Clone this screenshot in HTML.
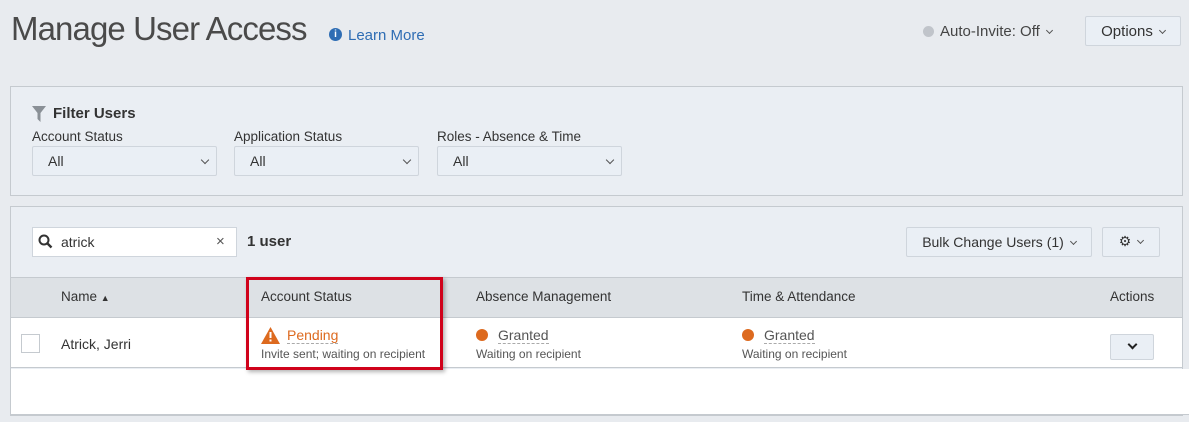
<!DOCTYPE html>
<html><head><style>
*{box-sizing:border-box;margin:0;padding:0}
body{width:1189px;height:422px;background:#e8ebef;font-family:"Liberation Sans",sans-serif;color:#333;position:relative;overflow:hidden;font-size:13px}
.a{position:absolute}
.sel{position:absolute;height:30px;background:#eaeff5;border:1px solid #cfd5dc;border-radius:2px;font-size:14px;padding:6px 0 0 15px;color:#333}
.sel:after{content:"";position:absolute;right:8px;top:10px;width:5px;height:5px;border-right:1px solid #555;border-bottom:1px solid #555;transform:rotate(45deg)}
.lbl{position:absolute;font-size:13.5px;color:#333}
.btn{position:absolute;background:#eaeff5;border:1px solid #cfd5dc;border-radius:2px;font-size:14px;color:#333;text-align:center}
.chev{display:inline-block;width:5px;height:5px;border-right:1px solid #555;border-bottom:1px solid #555;transform:rotate(45deg);margin-left:7px;position:relative;top:-3px}
.th{position:absolute;top:289px;font-size:13.5px;color:#333}
.dot{display:inline-block;width:12px;height:12px;border-radius:50%;background:#dd6a1f;vertical-align:-1px;margin-right:10px}
.g{border-bottom:1px dashed #aaa;color:#555;font-size:14px}
.sub{position:absolute;font-size:12px;color:#555}
</style></head><body>
<div class="a" style="left:11px;top:10px;font-size:33px;color:#4a4a4a;letter-spacing:-0.9px;font-weight:300">Manage User Access</div>
<div class="a" style="left:329px;top:28px;width:13px;height:13px;border-radius:50%;background:#2e6db4;color:#fff;font-size:10px;font-weight:bold;text-align:center;line-height:13px">i</div>
<div class="a" style="left:348px;top:27px;font-size:15px;color:#2e6db4">Learn More</div>
<div class="a" style="left:923px;top:26px;width:11px;height:11px;border-radius:50%;background:#c0c4ca"></div>
<div class="a" style="left:940px;top:23px;font-size:15px;color:#444">Auto-Invite: Off<span class="chev"></span></div>
<div class="btn" style="left:1085px;top:16px;width:96px;height:30px;padding-top:6px;font-size:15px">Options<span class="chev"></span></div>

<div class="a" style="left:10px;top:86px;width:1173px;height:110px;background:#eaeef3;border:1px solid #c5cacf"></div>
<svg class="a" style="left:32px;top:106px" width="14" height="16" viewBox="0 0 14 16"><path d="M0 0H14L8.5 7V16L5.5 13V7Z" fill="#8a9096"/></svg>
<div class="a" style="left:53px;top:105px;font-size:15px;font-weight:bold;color:#333">Filter Users</div>
<div class="lbl" style="left:32px;top:129px">Account Status</div>
<div class="lbl" style="left:234px;top:129px">Application Status</div>
<div class="lbl" style="left:437px;top:129px">Roles - Absence &amp; Time</div>
<div class="sel" style="left:32px;top:146px;width:185px">All</div>
<div class="sel" style="left:234px;top:146px;width:185px">All</div>
<div class="sel" style="left:437px;top:146px;width:185px">All</div>

<div class="a" style="left:10px;top:206px;width:1173px;height:210px;background:#eaeef3;border:1px solid #c5cacf"></div>
<div class="a" style="left:32px;top:227px;width:205px;height:30px;background:#fff;border:1px solid #cfd5dc"></div>
<svg class="a" style="left:38px;top:234px" width="15" height="15" viewBox="0 0 15 15"><circle cx="6" cy="6" r="4.5" fill="none" stroke="#333" stroke-width="2"/><path d="M9.5 9.5L13.5 13.5" stroke="#333" stroke-width="2.4"/></svg>
<div class="a" style="left:61px;top:234px;font-size:14px;color:#333">atrick</div>
<div class="a" style="left:216px;top:233px;font-size:15px;color:#555">×</div>
<div class="a" style="left:247px;top:233px;font-size:15px;font-weight:bold;color:#333">1 user</div>
<div class="btn" style="left:906px;top:227px;width:186px;height:30px;padding-top:6px">Bulk Change Users (1)<span class="chev"></span></div>
<div class="btn" style="left:1102px;top:227px;width:58px;height:30px;padding-top:5px"><span style="font-size:14px">⚙</span><span class="chev"></span></div>

<div class="a" style="left:11px;top:277px;width:1171px;height:41px;background:#dde1e5;border-top:1px solid #c5cacf;border-bottom:1px solid #c5cacf"></div>
<div class="a" style="left:11px;top:318px;width:1171px;height:50px;background:#fff;border-bottom:1px solid #c5cacf"></div>
<div class="a" style="left:11px;top:369px;width:1178px;height:46px;background:#fff;border-bottom:1px solid #c5cacf"></div>
<div class="th" style="left:61px">Name <span style="font-size:9px">▲</span></div>
<div class="th" style="left:261px">Account Status</div>
<div class="th" style="left:476px">Absence Management</div>
<div class="th" style="left:742px">Time &amp; Attendance</div>
<div class="th" style="left:1110px">Actions</div>

<div class="a" style="left:21px;top:334px;width:19px;height:19px;border:1px solid #c5cacf;background:#fff"></div>
<div class="a" style="left:61px;top:336px;font-size:14px;color:#333">Atrick, Jerri</div>
<svg class="a" style="left:261px;top:327px" width="19" height="17" viewBox="0 0 19 17"><path d="M9.5 0L19 17H0Z" fill="#dd6a1f"/><rect x="8.5" y="5" width="2" height="6" fill="#fff"/><rect x="8.5" y="12.5" width="2" height="2" fill="#fff"/></svg>
<div class="a" style="left:287px;top:327px;font-size:14px;color:#dd6a1f;border-bottom:1px dashed #aaa">Pending</div>
<div class="sub" style="left:261px;top:347px">Invite sent; waiting on recipient</div>
<div class="a" style="left:476px;top:327px"><span class="dot"></span><span class="g">Granted</span></div>
<div class="sub" style="left:476px;top:347px">Waiting on recipient</div>
<div class="a" style="left:742px;top:327px"><span class="dot"></span><span class="g">Granted</span></div>
<div class="sub" style="left:742px;top:347px">Waiting on recipient</div>
<div class="btn" style="left:1110px;top:334px;width:44px;height:26px"><span style="display:inline-block;width:7px;height:7px;border-right:2.5px solid #222;border-bottom:2.5px solid #222;transform:rotate(45deg);margin-top:6px"></span></div>

<div class="a" style="left:246px;top:277px;width:197px;height:93px;border:3px solid #d0021b;box-shadow:2px 2px 4px rgba(0,0,0,0.3)"></div>
</body></html>
